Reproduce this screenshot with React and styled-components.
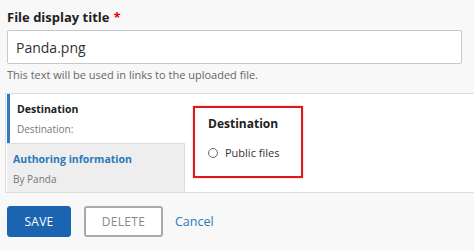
import React from "react";
import styled, { createGlobalStyle } from "styled-components";

const GlobalStyle = createGlobalStyle`
  html, body {
    margin: 0;
    padding: 0;
    background: #f8f8f8;
    font-family: "Open Sans", "DejaVu Sans", sans-serif;
    color: #222;
  }
`;

const Page = styled.div`
  width: 474px;
  height: 251px;
  overflow: hidden;
  padding: 0 0 0 7px;
  box-sizing: border-box;
`;

const Label = styled.label`
  display: block;
  padding-top: 8px;
  font-size: 13px;
  font-weight: 700;
  line-height: 18px;
  color: #222;
`;

const Required = styled.span`
  color: #e00;
  margin-left: 4px;
`;

const TextInput = styled.input`
  display: block;
  margin-top: 4px;
  width: 455px;
  height: 34px;
  box-sizing: border-box;
  padding: 0 8px;
  border: 1px solid #c8c8c8;
  border-radius: 2px;
  background: #fff;
  font-family: inherit;
  font-size: 14px;
  color: #333;
`;

const Description = styled.div`
  margin-top: 3px;
  font-size: 11px;
  line-height: 15px;
  color: #666;
`;

const VerticalTabs = styled.div`
  display: flex;
  margin: 11px 0 0 -2px;
  height: 100px;
  box-sizing: border-box;
  border: 1px solid #ddd;
  border-right: none;
  background: #fff;
`;

const TabMenu = styled.ul`
  list-style: none;
  margin: 0;
  padding: 0 0 0 1px;
  width: 178px;
  display: flex;
  flex-direction: column;
`;

const TabItem = styled.li`
  height: 49px;
  box-sizing: border-box;
  padding: 7px 0 0 7px;
  background: #fff;
  border-left: 3px solid #2d7bc0;
`;

const TabItemInactive = styled(TabItem)`
  padding-left: 6px;
  background: #eeeeee;
  border-left: none;
  border-top: 1px solid #ddd;
  border-right: 1px solid #ddd;
`;

const TabTitle = styled.div`
  font-size: 10.5px;
  font-weight: 700;
  line-height: 16px;
  color: ${({ $selected }) => ($selected ? "#222" : "#2a78bb")};
`;

const TabSummary = styled.div`
  margin-top: 5px;
  font-size: 10px;
  line-height: 14px;
  color: #777;
`;

const TabPane = styled.div`
  flex: 1;
  padding: 12px 0 0 8px;
`;

const Fieldset = styled.div`
  width: 110px;
  height: 72px;
  box-sizing: border-box;
  border: 2px solid #d9191a;
  box-shadow: 0 0 2px rgba(200, 0, 0, 0.3);
  padding: 7px 0 0 13px;
`;

const Legend = styled.div`
  font-size: 12px;
  font-weight: 700;
  line-height: 18px;
  color: #222;
`;

const RadioRow = styled.label`
  display: flex;
  align-items: center;
  gap: 7px;
  margin-top: 12px;
  font-size: 11px;
  color: #333;
`;

const Radio = styled.span`
  width: 8px;
  height: 8px;
  border: 1px solid #666;
  border-radius: 50%;
  background: #fff;
`;

const Actions = styled.div`
  display: flex;
  align-items: center;
  gap: 13px;
  margin-top: 13px;
`;

const Button = styled.button`
  height: 31px;
  box-sizing: border-box;
  border-radius: 3px;
  font-family: inherit;
  font-size: 12px;
  letter-spacing: 0.3px;
  cursor: pointer;
  padding: 0;
  width: ${({ $width }) => $width}px;
  background: ${({ $primary }) => ($primary ? "#1b65b0" : "#fff")};
  color: ${({ $primary }) => ($primary ? "#fff" : "#888")};
  border: ${({ $primary }) => ($primary ? "1px solid #1b65b0" : "2px solid #aaa")};
`;

const CancelLink = styled.a`
  font-size: 12.5px;
  color: #2a78bb;
  text-decoration: none;
  margin-left: -1px;
`;

export default function App() {
  return (
    <Page>
      <GlobalStyle />
      <Label>
        File display title<Required>*</Required>
      </Label>
      <TextInput defaultValue="Panda.png" />
      <Description>This text will be used in links to the uploaded file.</Description>
      <VerticalTabs>
        <TabMenu>
          <TabItem>
            <TabTitle $selected>Destination</TabTitle>
            <TabSummary>Destination:</TabSummary>
          </TabItem>
          <TabItemInactive>
            <TabTitle>Authoring information</TabTitle>
            <TabSummary>By Panda</TabSummary>
          </TabItemInactive>
        </TabMenu>
        <TabPane>
          <Fieldset>
            <Legend>Destination</Legend>
            <RadioRow>
              <Radio />
              Public files
            </RadioRow>
          </Fieldset>
        </TabPane>
      </VerticalTabs>
      <Actions>
        <Button $primary $width={64}>SAVE</Button>
        <Button $width={79}>DELETE</Button>
        <CancelLink href="#">Cancel</CancelLink>
      </Actions>
    </Page>
  );
}
